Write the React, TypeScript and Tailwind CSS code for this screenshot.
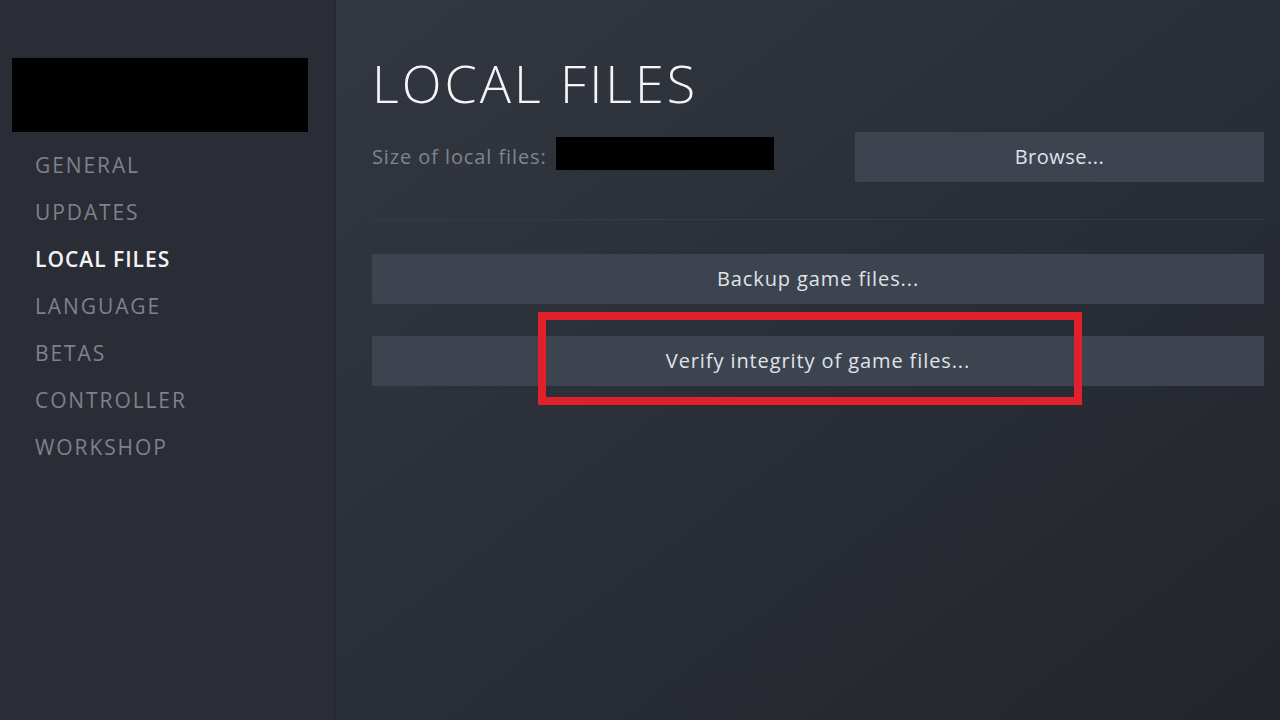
import React from "react";

const nav = ["GENERAL", "UPDATES", "LOCAL FILES", "LANGUAGE", "BETAS", "CONTROLLER", "WORKSHOP"];

export default function App() {
  return (
    <div
      className="flex w-[1280px] h-[720px] overflow-hidden"
      style={{ fontFamily: '"Open Sans", "Noto Sans", sans-serif' }}
    >
      <aside className="w-[336px] shrink-0 bg-[#2a2d35] pt-[58px] pl-[12px] border-r border-[#25282f]">
        <div className="w-[296px] h-[74px] bg-black" />
        <nav className="flex flex-col pl-[23px] pt-[19px] gap-[18px]">
          {nav.map((n) => (
            <div
              key={n}
              className={
                "text-[21px] leading-[29px] " +
                (n === "LOCAL FILES"
                  ? "text-[#f2f3f5] font-semibold tracking-[1px]"
                  : "text-[#7d828b] tracking-[1.9px]")
              }
            >
              {n}
            </div>
          ))}
        </nav>
      </aside>
      <main className="flex-1 bg-gradient-to-br from-[#333741] via-[#2a2e36] to-[#22252c] pl-[36px] pr-[16px] pt-[52px]">
        <h1 className="text-[52px] leading-[62px] font-light tracking-[3px] text-[#f4f5f6]">
          LOCAL FILES
        </h1>
        <div className="flex items-center mt-[18px] h-[50px]">
          <span className="text-[20px] tracking-[0.9px] text-[#7f858e]">Size of local files:</span>
          <div className="ml-[9px] self-start mt-[5px] w-[218px] h-[33px] bg-black" />
          <button className="ml-auto w-[409px] h-[50px] bg-[#3d4450] text-[#dfe3e8] text-[20px] tracking-[0.5px]">
            Browse...
          </button>
        </div>
        <div className="mt-[37px] h-px bg-[#363a43]" />
        <div className="flex flex-col gap-[32px] mt-[34px]">
          <button className="h-[50px] bg-[#3d4450] text-[#dfe3e8] text-[20px] tracking-[0.9px]">
            Backup game files...
          </button>
          <div className="relative">
            <button className="w-full h-[50px] bg-[#3d4450] text-[#dfe3e8] text-[20px] tracking-[0.9px]">
              Verify integrity of game files...
            </button>
            <div className="absolute left-[166px] top-[-24px] w-[544px] h-[93px] border-[8px] border-[#e0212b]" />
          </div>
        </div>
      </main>
    </div>
  );
}
